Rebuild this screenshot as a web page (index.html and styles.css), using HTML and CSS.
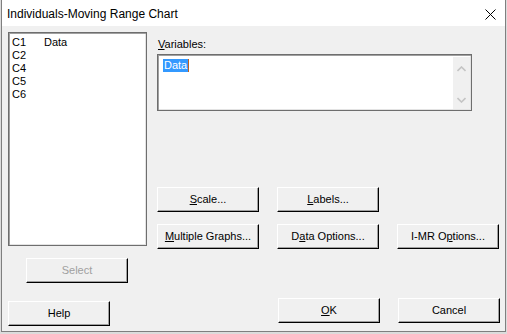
FILE: index.html
```html
<!DOCTYPE html>
<html>
<head>
<meta charset="utf-8">
<link rel="stylesheet" href="styles.css">
</head>
<body>
<div class="window">
  <div class="titlebar">
    <span class="title">Individuals-Moving Range Chart</span>
    <svg class="close" width="11" height="11" viewBox="0 0 11 11"><path d="M0.5 0.5 L10.5 10.5 M10.5 0.5 L0.5 10.5" stroke="#000" stroke-width="1" fill="none"/></svg>
  </div>
  <div class="client">
    <div class="main">
      <div class="left">
        <div class="listbox">
          <div class="item"><span class="col">C1</span><span>Data</span></div>
          <div class="item"><span class="col">C2</span></div>
          <div class="item"><span class="col">C4</span></div>
          <div class="item"><span class="col">C5</span></div>
          <div class="item"><span class="col">C6</span></div>
        </div>
        <div class="btn disabled select-btn">Select</div>
      </div>
      <div class="right">
        <div class="label"><u>V</u>ariables:</div>
        <div class="textbox">
          <div class="text-area"><span class="sel">Data</span><span class="caret"></span></div>
          <div class="scroll">
            <svg width="9" height="6" viewBox="0 0 9 6"><path d="M0.5 5 L4.5 1 L8.5 5" stroke="#c4c4c4" stroke-width="1.6" fill="none"/></svg>
            <svg width="9" height="6" viewBox="0 0 9 6"><path d="M0.5 1 L4.5 5 L8.5 1" stroke="#c4c4c4" stroke-width="1.6" fill="none"/></svg>
          </div>
        </div>
        <div class="btn-row first">
          <div class="btn"><u>S</u>cale...</div>
          <div class="btn"><u>L</u>abels...</div>
        </div>
        <div class="btn-row">
          <div class="btn"><u>M</u>ultiple Graphs...</div>
          <div class="btn">D<u>a</u>ta Options...</div>
          <div class="btn">I-MR O<u>p</u>tions...</div>
        </div>
      </div>
    </div>
    <div class="bottom">
      <div class="btn help">Help</div>
      <div class="spacer"></div>
      <div class="btn"><u>O</u>K</div>
      <div class="btn">Cancel</div>
    </div>
  </div>
</div>
</body>
</html>
```
FILE: styles.css
```css
html, body {
  margin: 0;
  padding: 0;
  background: #dcdcdc;
}
body {
  width: 507px;
  height: 334px;
  overflow: hidden;
}
.window {
  margin-left: 1px;
  width: 505px;
  height: 332px;
  box-sizing: border-box;
  border: 1px solid #7f7f7f;
  border-top: none;
  background: #f0f0f0;
  font-family: "Liberation Sans", Arial, sans-serif;
  font-size: 11px;
  color: #000;
}
.titlebar {
  height: 26px;
  background: #fff;
  display: flex;
  align-items: center;
  padding-left: 5px;
  padding-right: 9px;
}
.title {
  font-size: 12px;
  flex: 1;
  margin-top: 1px;
}
.close {
  display: block;
  margin-top: 2px;
}
.client {
  display: flex;
  flex-direction: column;
}
.main {
  display: flex;
}
.left {
  margin-left: 6px;
  margin-top: 6px;
  width: 139px;
  display: flex;
  flex-direction: column;
}
.listbox {
  height: 214px;
  box-sizing: border-box;
  background: #fff;
  border: 1px solid #6e6e6e;
  box-shadow: inset 1px 1px 0 #a0a0a0, inset -1px -1px 0 #e3e3e3;
  padding: 3px 0 0 3px;
}
.item {
  height: 13px;
  line-height: 13px;
  display: flex;
}
.col {
  width: 32px;
}
.btn {
  width: 102px;
  height: 25px;
  box-sizing: border-box;
  border: 1px solid;
  border-color: #fff #000 #000 #fff;
  box-shadow: inset -1px -1px 0 #a0a0a0;
  background: #f0f0f0;
  display: flex;
  align-items: center;
  justify-content: center;
  padding-bottom: 1px;
}
.disabled {
  color: #a0a0a0;
}
.select-btn {
  margin-top: 12px;
  margin-left: 18px;
}
.right {
  margin-left: 10px;
  display: flex;
  flex-direction: column;
}
.label {
  margin-top: 11px;
  margin-left: 1px;
  height: 14px;
  line-height: 14px;
}
.textbox {
  margin-top: 3px;
  width: 315px;
  height: 57px;
  box-sizing: border-box;
  background: #fff;
  border: 1px solid #6e6e6e;
  box-shadow: inset 1px 1px 0 #a0a0a0, inset -1px -1px 0 #e3e3e3;
  display: flex;
  padding: 2px 1px 1px 2px;
}
.text-area {
  flex: 1;
  padding: 2px 0 0 3px;
  display: flex;
  align-items: flex-start;
}
.sel {
  background: #3399ff;
  color: #fff;
  line-height: 13px;
  padding: 0 1px;
}
.caret {
  width: 1px;
  height: 13px;
  background: #c06020;
}
.scroll {
  width: 17px;
  background: #f0f0f0;
  display: flex;
  flex-direction: column;
  align-items: center;
  justify-content: space-between;
  padding: 9px 0 6px;
  box-sizing: border-box;
}
.scroll svg {
  display: block;
}
.btn-row {
  display: flex;
  gap: 18px;
  margin-top: 12px;
}
.btn-row.first {
  margin-top: 76px;
}
.bottom {
  display: flex;
  align-items: flex-start;
  margin-top: 15px;
  padding-left: 6px;
  gap: 18px;
}
.help {
  margin-top: 3px;
}
.spacer {
  width: 132px;
}
```
